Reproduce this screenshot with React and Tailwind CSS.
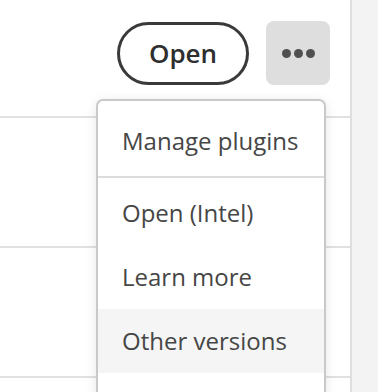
/* ======================================================
   DATA
====================================================== */

const menuItems = [
  { label: "Manage plugins", divider: true },
  { label: "Open (Intel)" },
  { label: "Learn more" },
  { label: "Other versions", hover: true },
];

/* ======================================================
   PAGE
====================================================== */

export default function App() {
  return (
    <main
      className="relative flex h-[392px] w-[378px] overflow-hidden bg-white text-[#4b4b4b]"
      style={{ fontFamily: '"Open Sans", "Noto Sans", sans-serif' }}
    >
      {/* LIST */}
      <section className="-mt-[12px] w-[350px] shrink-0">
        <Row>
          <div className="flex h-full items-center justify-end gap-[17px] pr-[20px] pt-[2px]">
            <button className="h-[63px] w-[132px] rounded-full border-[3px] border-[#3a3a3a] text-[26px] font-semibold text-[#2e2e2e]">
              Open
            </button>
            <button className="flex h-[64px] w-[64px] items-center justify-center rounded-[8px] bg-[#dedede]">
              <span className="flex gap-[3px]">
                <span className="h-[9px] w-[9px] rounded-full bg-[#505050]" />
                <span className="h-[9px] w-[9px] rounded-full bg-[#505050]" />
                <span className="h-[9px] w-[9px] rounded-full bg-[#505050]" />
              </span>
            </button>
          </div>
        </Row>
        <Row />
        <Row />
        <Row />
      </section>

      {/* GUTTER */}
      <aside className="flex-1 border-l-2 border-[#dedede] bg-[#f3f3f3]" />

      {/* MENU */}
      <div className="absolute left-[96px] top-[99px] w-[230px] rounded-[7px] border-2 border-[#c9c9c9] bg-white pb-[64px] pt-[8px] shadow-[0_2px_12px_rgba(0,0,0,0.10)]">
        {menuItems.map(item => (
          <div key={item.label}>
            <div
              className={`flex h-[64px] items-center pl-[24px] text-[24px] text-[#464646] ${
                item.hover ? "bg-[#f5f5f5]" : ""
              }`}
            >
              {item.label}
            </div>
            {item.divider && (
              <div className="my-[3px] h-[2px] bg-[#dcdcdc]" />
            )}
          </div>
        ))}
      </div>
    </main>
  );
}

/* ======================================================
   SMALL UI
====================================================== */

function Row({ children }) {
  return (
    <div className="h-[130px] border-b-2 border-[#e1e1e1]">{children}</div>
  );
}
